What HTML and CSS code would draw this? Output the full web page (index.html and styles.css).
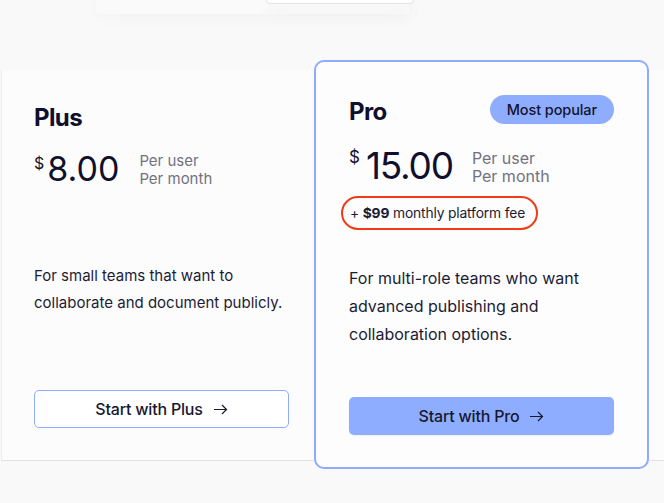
FILE: index.html
```html
<!DOCTYPE html>
<html lang="en">
<head>
<meta charset="utf-8">
<title>Pricing</title>
<link rel="stylesheet" href="styles.css">
</head>
<body>
<div class="page">
  <div class="top-strip">
    <div class="ghost-panel">
      <div class="popover"></div>
    </div>
  </div>
  <div class="plans">
    <div class="card card-plus">
      <h2 class="plan-name">Plus</h2>
      <div class="price-row">
        <span class="currency">$</span>
        <span class="amount">8.00</span>
        <span class="per">Per user<br>Per month</span>
      </div>
      <p class="desc">For small teams that want to collaborate and document publicly.</p>
      <a class="btn btn-outline" href="#">Start with Plus
        <svg class="arrow" width="15" height="11" viewBox="0 0 15 11"><path d="M1 5.5H13.5M9 1L13.5 5.5L9 10" fill="none" stroke="#17172f" stroke-width="1.2"/></svg>
      </a>
    </div>
    <div class="card card-pro">
      <div class="pro-head">
        <h2 class="plan-name">Pro</h2>
        <span class="badge">Most popular</span>
      </div>
      <div class="price-row">
        <span class="currency">$</span>
        <span class="amount">15.00</span>
        <span class="per">Per user<br>Per month</span>
      </div>
      <div class="fee">+ <strong>$99</strong> monthly platform fee</div>
      <p class="desc">For multi-role teams who want advanced publishing and collaboration options.</p>
      <a class="btn btn-fill" href="#">Start with Pro
        <svg class="arrow" width="15" height="11" viewBox="0 0 15 11"><path d="M1 5.5H13.5M9 1L13.5 5.5L9 10" fill="none" stroke="#17172f" stroke-width="1.2"/></svg>
      </a>
    </div>
    <div class="card card-next"></div>
  </div>
</div>
</body>
</html>
```
FILE: styles.css
```css
* { box-sizing: border-box; }
html, body { margin: 0; padding: 0; }
body {
  background: #f9f9f9;
  font-family: Inter, "Liberation Sans", sans-serif;
  color: #13132e;
  overflow: hidden;
  width: 664px;
  height: 503px;
}
.page { width: 664px; }

.top-strip {
  height: 70px;
  padding-left: 96px;
}
.ghost-panel {
  width: 314px;
  height: 14px;
  background: #fafafa;
  box-shadow: 0 0 22px rgba(0, 0, 0, 0.045);
  padding-left: 170px;
}
.popover {
  width: 148px;
  height: 4px;
  background: #fff;
  border: 1px solid #e4e4e4;
  border-top: none;
  border-radius: 0 0 4px 4px;
  box-shadow: 0 8px 18px rgba(0, 0, 0, 0.08);
}

.plans {
  display: flex;
  align-items: stretch;
  height: 391px;
  padding-left: 1px;
}
.card {
  display: flex;
  flex-direction: column;
  flex: none;
  background: #fcfcfd;
}
.card-plus {
  width: 313px;
  border-left: 1px solid #ebebf3;
  border-bottom: 1px solid #e3e3e6;
  padding: 33px 25px 32px 32px;
}
.card-next {
  width: 15px;
  border-bottom: 1px solid #e3e3e6;
}
.card-pro {
  width: 335px;
  margin: -10px 0 -8px;
  border: 2px solid #8dabff;
  border-radius: 10px;
  background: #fdfdfe;
  padding: 33px 33px 32px 33px;
  position: relative;
  z-index: 1;
}

.plan-name {
  margin: 0;
  font-size: 24px;
  line-height: 29px;
  font-weight: 700;
  color: #10102c;
  letter-spacing: -0.6px;
}
.pro-head {
  display: flex;
  justify-content: space-between;
  align-items: center;
  height: 29px;
}
.pro-head .plan-name { padding-top: 3px; }
.badge {
  display: inline-flex;
  align-items: center;
  height: 29px;
  padding: 0 17px;
  border-radius: 15px;
  background: #8fadff;
  font-size: 14.5px;
  font-weight: 500;
  color: #13132e;
  letter-spacing: -0.1px;
}

.price-row {
  display: flex;
  align-items: flex-start;
}
.card-plus .price-row { margin-top: 20px; }
.card-pro .price-row { margin-top: 23px; }

.currency {
  font-size: 16px;
  line-height: 16px;
  margin-top: 3px;
  margin-right: 3px;
}
.card-pro .currency { margin-top: 2px; font-size: 17px; margin-right: 6px; }
.amount {
  font-size: 34px;
  line-height: 34px;
  font-weight: 400;
  color: #10102c;
  letter-spacing: 0;
}
.card-pro .amount { font-size: 37px; line-height: 37px; letter-spacing: -1.2px; }
.per {
  margin-left: 20px;
  font-size: 15px;
  line-height: 18px;
  color: #72727f;
}
.card-pro .per {
  margin-left: 19px;
  margin-top: 1.5px;
  font-size: 16px;
  line-height: 18.5px;
}

.fee {
  align-self: flex-start;
  margin: 10px 0 0 -8px;
  height: 34px;
  width: 197px;
  display: flex;
  align-items: center;
  padding-left: 7px;
  border: 2px solid #f23a16;
  border-radius: 17px;
  font-size: 13.8px;
  letter-spacing: -0.15px;
  color: #1b1b33;
  white-space: pre;
}
.fee strong { font-weight: 700; }

.desc {
  margin: 0;
  color: #1c1c34;
}
.card-plus .desc {
  margin-top: 74px;
  font-size: 15px;
  line-height: 27.3px;
}
.card-pro .desc {
  margin-top: 34px;
  font-size: 16px;
  line-height: 28.3px;
}

.btn {
  margin-top: auto;
  height: 38px;
  display: flex;
  align-items: center;
  justify-content: center;
  gap: 10px;
  border-radius: 5px;
  font-size: 16px;
  font-weight: 500;
  color: #17172f;
  text-decoration: none;
  letter-spacing: -0.2px;
}
.btn-outline {
  background: #fff;
  border: 1px solid #8fadff;
}
.btn-fill {
  background: #8fadff;
  box-shadow: 0 1px 2px rgba(0, 0, 0, 0.06);
}
.arrow { display: block; margin-top: 1px; }
```
